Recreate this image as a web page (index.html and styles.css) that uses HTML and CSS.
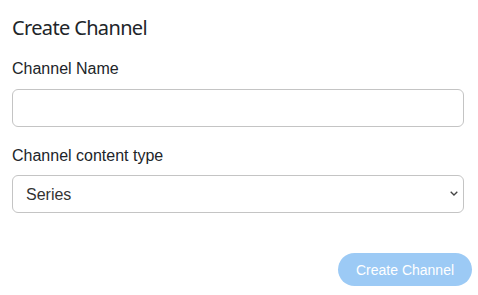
FILE: index.html
```html
<!DOCTYPE html>
<html>
<head>
<meta charset="utf-8">
<link rel="stylesheet" href="styles.css">
</head>
<body>
<div class="page">
  <h1 class="title">Create Channel</h1>
  <label class="label" for="name">Channel Name</label>
  <input class="field" id="name" type="text">
  <label class="label label-second" for="type">Channel content type</label>
  <div class="select-wrap">
    <select class="field select" id="type">
      <option>Series</option>
    </select>
    <svg class="chevron" width="8" height="5" viewBox="0 0 8 5"><path d="M0.7 0.7 L4 4 L7.3 0.7" fill="none" stroke="#444" stroke-width="1.3"/></svg>
  </div>
  <div class="actions">
    <button class="btn" disabled>Create Channel</button>
  </div>
</div>
</body>
</html>
```
FILE: styles.css
```css
* { box-sizing: border-box; }
html, body { margin: 0; padding: 0; background: #fff; }
.page {
  padding: 14px 6px 0 12px;
  font-family: "Liberation Sans", Arial, sans-serif;
  color: #212529;
  display: flex;
  flex-direction: column;
}
.title {
  margin: 0 0 18px 0;
  font-family: "Noto Sans", "Open Sans", sans-serif;
  font-weight: 400;
  font-size: 20px;
  line-height: 28px;
  letter-spacing: -0.65px;
}
.label {
  display: block;
  font-size: 16px;
  line-height: 18px;
  margin-bottom: 11px;
}
.label-second { margin-top: 20px; margin-bottom: 10px; }
.field {
  display: block;
  width: 452px;
  height: 38px;
  border: 1px solid #c4c4c4;
  border-radius: 6px;
  background: #fff;
  font-family: "Liberation Sans", Arial, sans-serif;
  font-size: 16px;
  color: #333;
  padding: 0 13px;
  margin: 0;
  outline: none;
}
.select-wrap { position: relative; width: 452px; }
.select { appearance: none; -webkit-appearance: none; }
.chevron { position: absolute; right: 6px; top: 16px; pointer-events: none; }
.actions {
  display: flex;
  justify-content: flex-end;
  margin-top: 40px;
}
.btn {
  height: 33px;
  width: 134px;
  border: none;
  border-radius: 17px;
  background: #9ccaf5;
  color: #fff;
  font-family: "Liberation Sans", Arial, sans-serif;
  font-size: 14px;
  padding: 0;
}
```
